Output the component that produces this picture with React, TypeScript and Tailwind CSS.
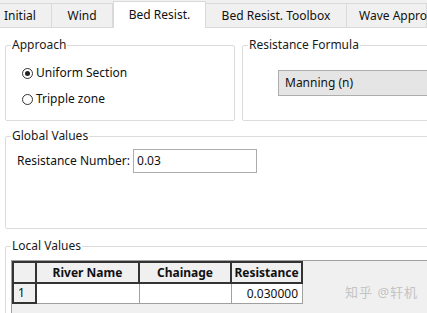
import { ReactNode } from "react";

const tabs = ["Initial", "Wind", "Bed Resist.", "Bed Resist. Toolbox", "Wave Appro"];
const tabWidths = ["w-[52px]", "w-[61px]", "w-[93px]", "w-[141px]", "w-[80px]"];

function Group({ title, className, children }: { title: string; className: string; children?: ReactNode }) {
    return (
        <fieldset className={`border border-[#dcdcdc] rounded-[2px] px-0 ${className}`}>
            <legend className="ml-[5px] px-[1px] leading-[16px] text-[#1a1a1a]">{title}</legend>
            {children}
        </fieldset>
    );
}

function Radio({ label, checked }: { label: string; checked?: boolean }) {
    return (
        <div className="flex items-center gap-[3px] h-[16px]">
            <span className="w-[11px] h-[11px] rounded-full border border-[#333] flex items-center justify-center bg-white">
                {checked && <span className="w-[5px] h-[5px] rounded-full bg-[#222]" />}
            </span>
            <span>{label}</span>
        </div>
    );
}

function App() {
    return (
        <div
            className="relative w-[427px] h-[313px] overflow-hidden bg-white text-[12px] text-[#111]"
            style={{ fontFamily: '"Noto Sans", "Noto Sans CJK SC", sans-serif' }}
        >
            {/* tab strip */}
            <div className="h-[28px] bg-[#f0f0f0] border-b border-[#dadada] flex items-end whitespace-nowrap">
                {tabs.map((t, i) =>
                    t === "Bed Resist." ? (
                        <div
                            key={t}
                            className={`${tabWidths[i]} shrink-0 h-[27px] -mb-[1px] bg-white border-x border-t border-[#dadada] flex items-center justify-center`}
                        >
                            {t}
                        </div>
                    ) : (
                        <div
                            key={t}
                            className={`${tabWidths[i]} shrink-0 h-[24px] border-r border-t border-[#dadada] flex items-center ${i === 0 ? "pl-[4px]" : i === 4 ? "pl-[12px]" : "justify-center"}`}
                        >
                            {t}
                        </div>
                    )
                )}
            </div>

            <div className="pl-[5px] pt-[9px]">
                <div className="flex gap-[7px] h-[84px]">
                    <Group title="Approach" className="w-[230px] shrink-0">
                        <div className="pl-[16px] pt-[12px] flex flex-col gap-[10px]">
                            <Radio label="Uniform Section" checked />
                            <Radio label="Tripple zone" />
                        </div>
                    </Group>
                    <Group title="Resistance Formula" className="w-[200px] shrink-0">
                        <div className="pl-[35px] pt-[17px]">
                            <div className="h-[26px] bg-[#e5e5e5] border border-[#adadad] flex items-center pl-[6px]">
                                Manning (n)
                            </div>
                        </div>
                    </Group>
                </div>

                <Group title="Global Values" className="mt-[7px] w-[440px] h-[101px]">
                    <div className="flex items-center pl-[11px] pt-[5px] gap-[3px]">
                        <span>Resistance Number:</span>
                        <div className="w-[124px] h-[24px] border border-[#acacac] flex items-center pl-[3px]">0.03</div>
                    </div>
                </Group>

                <Group title="Local Values" className="mt-[9px] w-[440px] h-[90px]">
                    <div className="ml-[5px] mt-[6px] h-[60px] bg-[#f0f0f0] border-l border-t border-[#a0a0a0]">
                        <div className="flex">
                            <div className="w-[25px] h-[23px] border-2 border-[#333] bg-[#f0f0f0]" />
                            <div className="w-[103px] h-[23px] border-2 border-l-0 border-[#333] bg-[#f0f0f0] font-bold flex items-center justify-center">River Name</div>
                            <div className="w-[92px] h-[23px] border-2 border-l-0 border-[#333] bg-[#f0f0f0] font-bold flex items-center justify-center">Chainage</div>
                            <div className="w-[71px] h-[23px] border-2 border-l-0 border-[#333] bg-[#f0f0f0] font-bold flex items-center justify-center">Resistance</div>
                        </div>
                        <div className="flex">
                            <div className="w-[25px] h-[20px] border-2 border-t-0 border-[#333] bg-[#f0f0f0] flex items-center pl-[4px]">1</div>
                            <div className="w-[103px] h-[20px] border-r border-b border-[#a0a0a0] bg-white" />
                            <div className="w-[92px] h-[20px] border-r border-b border-[#a0a0a0] bg-white" />
                            <div className="w-[71px] h-[20px] border-r border-b border-[#a0a0a0] bg-white flex items-center justify-end pr-[4px]">0.030000</div>
                        </div>
                    </div>
                </Group>
            </div>

            <div className="absolute left-[345px] top-[283px] text-[13px] text-[#c4c4c4] tracking-[1px]">知乎 @轩机</div>
        </div>
    );
}

export default App;
